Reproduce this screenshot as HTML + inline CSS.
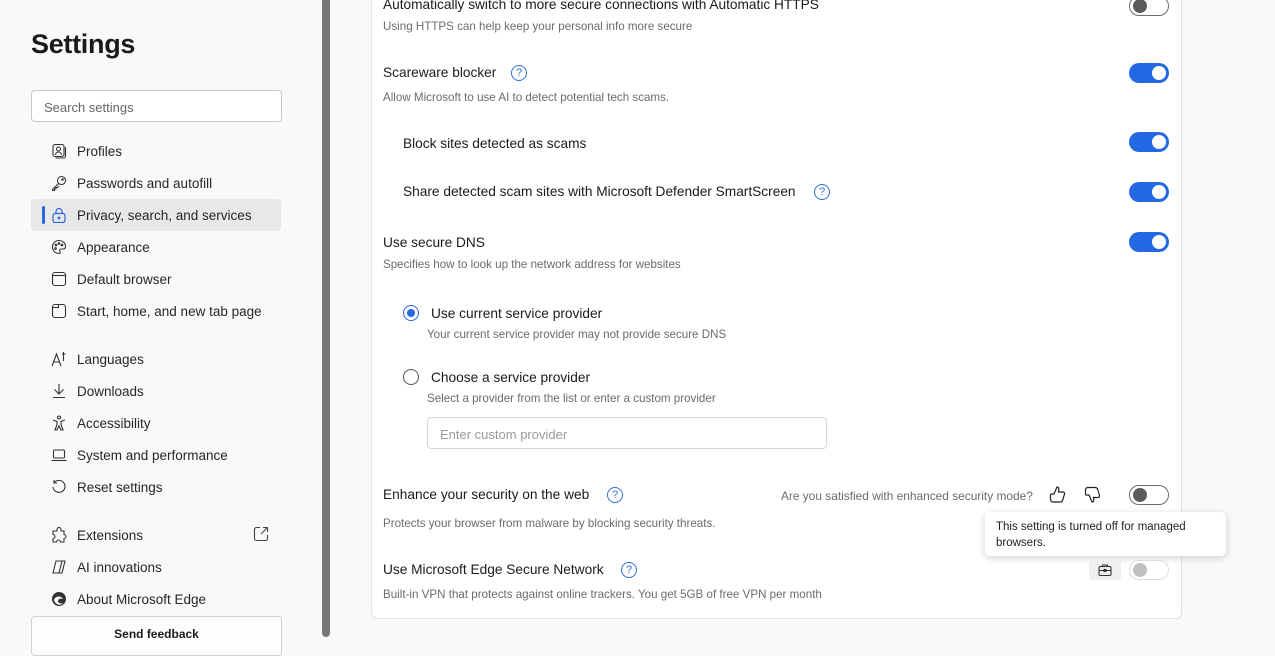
<!DOCTYPE html>
<html><head><meta charset="utf-8"><style>
*{box-sizing:border-box;margin:0;padding:0}
body{width:1275px;height:641px;overflow:hidden;background:#f9f9f9;font-family:"Liberation Sans",sans-serif;color:#1b1b1b;position:relative}
.a{position:absolute;white-space:nowrap}
.h1{left:31px;top:29px;font-size:27px;font-weight:bold;color:#1a1a1a;letter-spacing:-0.3px}
.search{left:31px;top:90px;width:251px;height:32px;border:1px solid #c8c8c8;border-radius:4px;background:#fff;font-size:13px;color:#666;padding:9px 12px}
.nav{left:31px;width:250px;height:32px;font-size:13.5px;color:#262626;padding-left:46px;line-height:33px}
.nav svg{position:absolute;left:20px;top:8px}
.sel{background:#e8e8e8;border-radius:4px}
.bar{left:42px;top:206px;width:3px;height:18px;background:#2a67e2;border-radius:2px}
.scroll{left:322px;top:0;width:8px;height:637px;background:#777;border-radius:0 0 4px 4px}
.feedback{left:31px;top:616px;width:251px;height:40px;border:1px solid #d0d0d0;border-radius:4px;background:#fdfdfd;text-align:center;font-size:12px;font-weight:bold;padding-top:10px}
.card{left:371px;top:-10px;width:811px;height:629px;background:#fff;border:1px solid #e3e3e3;border-radius:6px}
.t{font-size:13.7px;color:#1b1b1b}
.s{font-size:11.6px;color:#6b6b6b}
.tg{position:absolute;left:1129px;width:40px;height:20px;border-radius:10px;background:#2468e4}
.tg:after{content:"";position:absolute;right:3px;top:3px;width:14px;height:14px;border-radius:50%;background:#fff}
.off{background:#fff;border:1px solid #6c6c6c}
.off:after{left:3px;top:2px;right:auto;background:#5c5c5c}
.dis{background:#fff;border:1px solid #ddd}
.dis:after{left:3px;top:2px;right:auto;background:#c0c0c0}
.q{position:absolute;width:16px;height:16px;border:1.3px solid #2f6fe0;border-radius:50%;color:#2f6fe0;font-size:11px;text-align:center;line-height:14px}
</style></head><body>
<div class="a h1">Settings</div>
<div class="a search">Search settings</div>

<div class="a nav" style="top:135px"><svg width="16" height="16" viewBox="0 0 16 16" fill="none" stroke="#333" stroke-width="1.1"><rect x="2" y="1.5" width="11" height="12" rx="2"/><circle cx="7.5" cy="6" r="2"/><path d="M4.5 12c0-2 1.5-3 3-3s3 1 3 3M14.5 4v9a2 2 0 0 1-2 2h-8"/></svg>Profiles</div>
<div class="a nav" style="top:167px"><svg width="16" height="16" viewBox="0 0 16 16" fill="none" stroke="#333" stroke-width="1.1"><circle cx="10.5" cy="5.5" r="4"/><path d="M7.5 8.5 1.5 14.5v1h2v-1.5h1.5v-1.5h1.5l1.5-1.5"/><circle cx="11.5" cy="4.5" r=".7" fill="#333"/></svg>Passwords and autofill</div>
<div class="a nav sel" style="top:199px"><svg width="16" height="16" viewBox="0 0 16 16" fill="none" stroke="#2a67e2" stroke-width="1.2"><rect x="2" y="6.5" width="12" height="9" rx="2"/><path d="M5 6.5V4.5a3 3 0 0 1 6 0v2"/><circle cx="8" cy="11" r=".8" fill="#2a67e2"/></svg>Privacy, search, and services</div>
<div class="a bar"></div>
<div class="a nav" style="top:231px"><svg width="16" height="16" viewBox="0 0 16 16" fill="none" stroke="#333" stroke-width="1.1"><path d="M8 1.5a6.5 6.5 0 1 0 0 13c1.5 0 1.5-1.5.8-2.3-.7-.9 0-2.2 1.2-2.2h2c1.5 0 2.5-1 2.5-2.5C14.5 4 11.5 1.5 8 1.5z"/><circle cx="5" cy="6" r=".8"/><circle cx="8" cy="4.5" r=".8"/><circle cx="11" cy="6" r=".8"/><circle cx="4.5" cy="9.5" r=".8"/></svg>Appearance</div>
<div class="a nav" style="top:263px"><svg width="16" height="16" viewBox="0 0 16 16" fill="none" stroke="#333" stroke-width="1.1"><rect x="1.5" y="1.5" width="13" height="13" rx="2.5"/><path d="M1.5 4.5h13"/></svg>Default browser</div>
<div class="a nav" style="top:295px"><svg width="16" height="16" viewBox="0 0 16 16" fill="none" stroke="#333" stroke-width="1.1"><rect x="1.5" y="1.5" width="13" height="13" rx="2.5"/><path d="M1.5 4.5h6v-3"/></svg>Start, home, and new tab page</div>

<div class="a nav" style="top:343px"><svg width="16" height="16" viewBox="0 0 16 16" fill="none" stroke="#333" stroke-width="1.1"><path d="M1 15 5.5 3 10 15M2.5 11h6M12.5 1v9M11 3h3.5"/></svg>Languages</div>
<div class="a nav" style="top:375px"><svg width="16" height="16" viewBox="0 0 16 16" fill="none" stroke="#333" stroke-width="1.1"><path d="M8 1v10M3.5 6.5 8 11l4.5-4.5M2 14.5h12"/></svg>Downloads</div>
<div class="a nav" style="top:407px"><svg width="16" height="16" viewBox="0 0 16 16" fill="none" stroke="#333" stroke-width="1.1"><circle cx="8" cy="2.5" r="1.5"/><path d="M2 5l4 1.5v3L4 15h2l2-4 2 4h2l-2-5.5v-3L14 5"/></svg>Accessibility</div>
<div class="a nav" style="top:439px"><svg width="16" height="16" viewBox="0 0 16 16" fill="none" stroke="#333" stroke-width="1.1"><rect x="2.5" y="3" width="11" height="8" rx="1"/><path d="M.5 13.5h15"/></svg>System and performance</div>
<div class="a nav" style="top:471px"><svg width="16" height="16" viewBox="0 0 16 16" fill="none" stroke="#333" stroke-width="1.1"><path d="M3 4a6 6 0 1 1-1 4M3 1v3h3"/></svg>Reset settings</div>

<div class="a nav" style="top:519px"><svg width="16" height="16" viewBox="0 0 16 16" fill="none" stroke="#333" stroke-width="1.1"><path d="M6 2.5a2 2 0 0 1 4 0V4h3v3.5a2 2 0 0 1 0 4V15H9.5a2 2 0 0 0-4 0H2v-3.5a2 2 0 0 0 0-4V4h4z"/></svg>Extensions<svg style="left:222px;top:7px" width="16" height="16" viewBox="0 0 16 16" fill="none" stroke="#444" stroke-width="1.1"><path d="M7 1.5H3.5a2 2 0 0 0-2 2v9a2 2 0 0 0 2 2h9a2 2 0 0 0 2-2V9M10 1.5h4.5V6M14.5 1.5 8 8"/></svg></div>
<div class="a nav" style="top:551px"><svg width="16" height="16" viewBox="0 0 16 16" fill="none" stroke="#333" stroke-width="1.1"><path d="M5 2h6l-3 12H2zM11 2h3l-3 12H8"/></svg>AI innovations</div>
<div class="a nav" style="top:583px"><svg width="16" height="16" viewBox="0 0 16 16"><circle cx="8" cy="8" r="7" fill="#333"/><path d="M3 9c1-4 7-5 9-1-2-1-5 0-5 2s3 3 5 2c-2 3-8 2-9-3z" fill="#f9f9f9"/></svg>About Microsoft Edge</div>
<div class="a feedback">Send feedback</div>
<div class="a scroll"></div>

<div class="a card"></div>
<div class="a t" style="left:383px;top:-3px">Automatically switch to more secure connections with Automatic HTTPS</div>
<div class="a s" style="left:383px;top:20px">Using HTTPS can help keep your personal info more secure</div>
<div class="tg off" style="top:-4px"></div>

<div class="a t" style="left:383px;top:65px">Scareware blocker</div>
<div class="q" style="left:511px;top:65px">?</div>
<div class="a s" style="left:383px;top:91px">Allow Microsoft to use AI to detect potential tech scams.</div>
<div class="tg" style="top:63px"></div>

<div class="a t" style="left:403px;top:136px">Block sites detected as scams</div>
<div class="tg" style="top:132px"></div>
<div class="a t" style="left:403px;top:184px">Share detected scam sites with Microsoft Defender SmartScreen</div>
<div class="q" style="left:814px;top:184px">?</div>
<div class="tg" style="top:182px"></div>

<div class="a t" style="left:383px;top:235px">Use secure DNS</div>
<div class="a s" style="left:383px;top:258px">Specifies how to look up the network address for websites</div>
<div class="tg" style="top:232px"></div>

<div class="a" style="left:403px;top:305px;width:16px;height:16px;border:1.5px solid #2468e4;border-radius:50%"><div style="margin:2.5px;width:8px;height:8px;border-radius:50%;background:#2468e4"></div></div>
<div class="a t" style="left:431px;top:306px">Use current service provider</div>
<div class="a s" style="left:427px;top:328px">Your current service provider may not provide secure DNS</div>
<div class="a" style="left:403px;top:369px;width:16px;height:16px;border:1.3px solid #555;border-radius:50%"></div>
<div class="a t" style="left:431px;top:370px">Choose a service provider</div>
<div class="a s" style="left:427px;top:392px">Select a provider from the list or enter a custom provider</div>
<div class="a" style="left:427px;top:417px;width:400px;height:32px;border:1px solid #d6d6d6;border-radius:4px;font-size:13px;color:#9a9a9a;padding:9px 12px">Enter custom provider</div>

<div class="a t" style="left:383px;top:487px">Enhance your security on the web</div>
<div class="q" style="left:607px;top:487px">?</div>
<div class="a s" style="left:781px;top:489px;font-size:11.9px">Are you satisfied with enhanced security mode?</div>
<svg class="a" style="left:1048px;top:485px" width="18" height="20" viewBox="0 0 18 20" fill="none" stroke="#222" stroke-width="1.2"><path d="M3 9h3l3-7c2 0 2 2 1.5 5H15c1.2 0 1.8 1 1.5 2l-1.8 6c-.4 1.2-1.2 2-2.5 2H5c-1.5 0-2.5-1-2.5-2.5V11C2.5 10 2.5 9 3 9z"/></svg>
<svg class="a" style="left:1083px;top:485px" width="18" height="20" viewBox="0 0 18 20" fill="none" stroke="#222" stroke-width="1.2"><path d="M3 10h3l3 7c2 0 2-2 1.5-4.5H15c1.2 0 1.8-1 1.5-2l-1.8-6c-.4-1.2-1.2-2-2.5-2H5c-1.5 0-2.5 1-2.5 2.5V8c0 1 0 2 .5 2z"/></svg>
<div class="tg off" style="top:485px"></div>
<div class="a s" style="left:383px;top:517px">Protects your browser from malware by blocking security threats.</div>

<div class="a" style="left:985px;top:512px;width:241px;height:44px;background:#fff;border-radius:5px;box-shadow:0 2px 8px rgba(0,0,0,.18);font-size:11.5px;color:#222;padding:7px 11px;line-height:16px">This setting is turned off for managed<br>browsers.</div>

<div class="a t" style="left:383px;top:562px">Use Microsoft Edge Secure Network</div>
<div class="q" style="left:621px;top:562px">?</div>
<div class="a s" style="left:383px;top:588px">Built-in VPN that protects against online trackers. You get 5GB of free VPN per month</div>
<div class="a" style="left:1089px;top:560px;width:32px;height:20px;background:#f0f0f0;border-radius:2px"><svg style="position:absolute;left:9px;top:3px" width="14" height="14" viewBox="0 0 14 14" fill="none" stroke="#333" stroke-width="1.1"><rect x="1" y="3.5" width="12" height="9" rx="1.5"/><path d="M4.5 3.5V2h5v1.5M1 7.5h12"/><rect x="6" y="6.5" width="2" height="2" fill="#333"/></svg></div>
<div class="tg dis" style="top:560px"></div>
</body></html>
